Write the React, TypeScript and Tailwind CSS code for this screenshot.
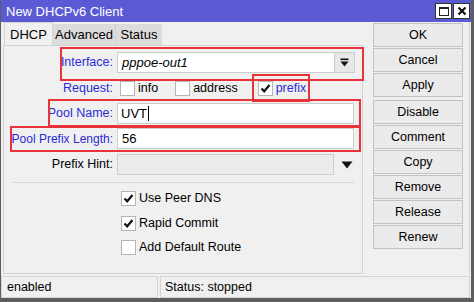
import React from "react";

const buttons = [
  { label: "OK", gap: false },
  { label: "Cancel", gap: false },
  { label: "Apply", gap: false },
  { label: "Disable", gap: true },
  { label: "Comment", gap: false },
  { label: "Copy", gap: false },
  { label: "Remove", gap: false },
  { label: "Release", gap: false },
  { label: "Renew", gap: false },
];

const Check = ({ checked }: { checked?: boolean }) => (
  <span className="w-[15px] h-[15px] bg-white border border-[#b5b5b5] flex items-center justify-center shrink-0">
    {checked && (
      <svg width="11" height="11" viewBox="0 0 11 11">
        <path d="M1.5 5.5 L4.2 8.3 L9.5 2" fill="none" stroke="#111" strokeWidth="2.2" />
      </svg>
    )}
  </span>
);

const Label = ({ children, blue, small }: { children: React.ReactNode; blue?: boolean; small?: boolean }) => (
  <span
    className={`w-[113px] text-right pr-[4px] shrink-0 whitespace-nowrap ${small ? "text-[12px]" : ""} ${
      blue ? "text-[#2b2bd6]" : "text-black"
    }`}
  >
    {children}
  </span>
);

const RedBox = ({ className }: { className: string }) => (
  <span className={`absolute border-2 border-[#e8333a] pointer-events-none ${className}`} />
);

export default function App() {
  return (
    <div className="w-[474px] h-[302px] bg-[#f0f0f0] overflow-hidden flex flex-col border-r-[3px] border-b-[4px] border-l border-[#5e5e5e] font-['Liberation_Sans',Arial,sans-serif] text-[12.5px] text-black leading-none">
      {/* title bar */}
      <div className="h-[22px] bg-[#5a5ad5] flex items-center pl-[5px] pr-[1px] shrink-0">
        <span className="text-white text-[13px] flex-1">New DHCPv6 Client</span>
        <div className="flex gap-[1px]">
          <span className="w-[17px] h-[16px] bg-white border border-[#333] flex items-center justify-center">
            <span className="w-[10px] h-[9px] border border-[#222] border-t-2" />
          </span>
          <span className="w-[17px] h-[16px] bg-white border border-[#333] flex items-center justify-center">
            <svg width="10" height="10" viewBox="0 0 10 10">
              <path d="M1.5 1.5 L8.5 8.5 M8.5 1.5 L1.5 8.5" stroke="#111" strokeWidth="2.2" />
            </svg>
          </span>
        </div>
      </div>

      <div className="flex flex-1 min-h-0">
        {/* left side */}
        <div className="w-[362px] flex flex-col shrink-0 pl-[2px]">
          {/* tabs */}
          <div className="h-[23px] flex items-end pl-[1px] shrink-0">
            <div className="h-[23px] w-[49px] flex items-center justify-center border border-b-0 border-[#d4d4d4] bg-[#f0f0f0] text-[13px]">DHCP</div>
            <div className="h-[21px] w-[63px] flex items-center justify-center bg-[#dcdcdc] border-r border-[#cfcfcf] text-[13px]">Advanced</div>
            <div className="h-[21px] w-[46px] flex items-center justify-center bg-[#dcdcdc] text-[13px]">Status</div>
          </div>

          {/* panel */}
          <div className="flex-1 border border-[#d2d2d2] flex flex-col pt-[4px]">
            <div className="relative h-[25px] flex items-center">
              <RedBox className="left-[56px] right-[-2px] top-[-3px] bottom-[-6px]" />
              <Label blue>Interface:</Label>
              <span className="w-[218px] h-[21px] bg-white border border-[#cdcdcd] flex items-center pl-[4px] italic text-[13px]">pppoe-out1</span>
              <span className="w-[20px] h-[21px] bg-[#e8e8e8] border border-[#cdcdcd] border-l-0 flex items-center justify-center">
                <svg width="9" height="9" viewBox="0 0 9 9">
                  <rect x="0.5" y="0.5" width="8" height="1.6" fill="#111" />
                  <path d="M0.5 3.5 H8.5 L4.5 8.5 Z" fill="#111" />
                </svg>
              </span>
            </div>

            <div className="h-[25px] flex items-center mt-[1px]">
              <Label blue>Request:</Label>
              <span className="pl-[3px] flex items-center gap-[3px]">
                <Check />
                <span>info</span>
              </span>
              <span className="pl-[17px] flex items-center gap-[3px]">
                <Check />
                <span>address</span>
              </span>
              <span className="relative ml-[17px] flex items-center gap-[3px] pl-[3px]">
                <RedBox className="left-[-3px] right-[-4px] top-[-7px] bottom-[-6px]" />
                <Check checked />
                <span className="text-[#2b2bd6]">prefix</span>
              </span>
            </div>

            <div className="relative h-[25px] flex items-center">
              <RedBox className="left-[44px] right-[1px] top-[-2px] bottom-[-1px]" />
              <Label blue>Pool Name:</Label>
              <span className="w-[237px] h-[21px] bg-white border border-[#cdcdcd] flex items-center pl-[3px] text-[13px]">
                UVT<span className="w-[1px] h-[15px] bg-black ml-[1px]" />
              </span>
            </div>

            <div className="relative h-[25px] flex items-center">
              <RedBox className="left-[6px] right-[1px] top-[0px] bottom-[-1px]" />
              <Label blue small>Pool Prefix Length:</Label>
              <span className="w-[237px] h-[21px] bg-white border border-[#cdcdcd] flex items-center pl-[4px] text-[13px]">56</span>
            </div>

            <div className="h-[25px] flex items-center mt-[1px]">
              <Label>Prefix Hint:</Label>
              <span className="w-[217px] h-[21px] bg-[#ececec] border border-[#cdcdcd]" />
              <svg width="12" height="8" viewBox="0 0 12 8" className="ml-[7px]">
                <path d="M0.5 0.5 H11.5 L6 7.5 Z" fill="#111" />
              </svg>
            </div>

            <div className="mx-[8px] mt-[5px] border-t border-[#d6d6d6]" />

            <div className="pl-[117px] pt-[3px] flex flex-col">
              <div className="h-[25px] flex items-center gap-[3px]">
                <Check checked />
                <span>Use Peer DNS</span>
              </div>
              <div className="h-[24px] flex items-center gap-[3px]">
                <Check checked />
                <span>Rapid Commit</span>
              </div>
              <div className="h-[25px] flex items-center gap-[3px]">
                <Check />
                <span>Add Default Route</span>
              </div>
            </div>
          </div>
        </div>

        {/* right buttons */}
        <div className="flex-1 flex flex-col pl-[10px] pt-[1px] border-r border-[#d2d2d2] mr-[1px]">
          {buttons.map((b) => (
            <div
              key={b.label}
              className={`w-[90px] h-[24px] bg-[#ebebeb] border border-[#c2c2c2] flex items-center justify-center text-[12.5px] mb-[1px] ${b.gap ? "mt-[2px]" : ""}`}
            >
              {b.label}
            </div>
          ))}
        </div>
      </div>

      {/* status bar */}
      <div className="h-[24px] flex shrink-0 pt-[2px] pr-[1px]">
        <div className="w-[157px] border border-[#d4d4d4] flex items-center pl-[5px]">enabled</div>
        <div className="flex-1 border border-[#d4d4d4] ml-[2px] flex items-center pl-[4px]">Status: stopped</div>
      </div>
    </div>
  );
}
